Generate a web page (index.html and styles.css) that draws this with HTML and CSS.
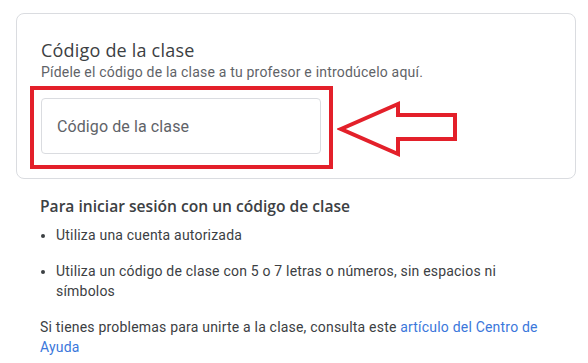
FILE: index.html
```html
<!DOCTYPE html>
<html lang="es">
<head>
    <meta charset="UTF-8">
    <meta name="viewport" content="width=device-width, initial-scale=1.0">
    <title>Unirse a una clase</title>
    <link rel="stylesheet" href="styles.css">
</head>
<body>
<div class="page">
    <div class="card">
        <div class="card-title">Código de la clase</div>
        <div class="card-sub">Pídele el código de la clase a tu profesor e introdúcelo aquí.</div>
        <input type="text" class="code-input" placeholder="Código de la clase">

        <!-- annotation drawn over the card -->
        <div class="mark-box"></div>
        <svg class="mark-arrow" width="130" height="64" viewBox="0 0 130 64">
            <polygon points="4,30 61,5 61,16 118,16 118,40 61,40 61,55"
                     fill="none" stroke="#e3202a" stroke-width="4" stroke-linejoin="miter"/>
        </svg>
    </div>

    <div class="help">
        <div class="help-title">Para iniciar sesión con un código de clase</div>
        <ul class="help-list">
            <li>Utiliza una cuenta autorizada</li>
            <li>Utiliza un código de clase con 5 o 7 letras o números, sin espacios ni símbolos</li>
        </ul>
        <p class="help-note">Si tienes problemas para unirte a la clase, consulta este <a href="#">artículo del Centro de Ayuda</a></p>
    </div>
</div>
</body>
</html>
```

FILE: styles.css
```css
body {
    margin: 0;
    background: #fff;
    font-family: Roboto, "Liberation Sans", Arial, sans-serif;
    color: #3c4043;
}
.page {
    width: 560px;
    padding: 13px 0 0 16px;
}
.card {
    position: relative;
    border: 1px solid #dadce0;
    border-radius: 8px;
    padding: 25px 24px 24px 24px;
}
.card-title {
    font-family: "Open Sans", sans-serif;
    font-size: 18px;
    line-height: 23px;
    letter-spacing: 0.2px;
    color: #3c4043;
}
.card-sub {
    font-size: 14px;
    line-height: 20px;
    color: #5f6368;
    letter-spacing: 0.2px;
}
.code-input {
    display: block;
    box-sizing: border-box;
    width: 280px;
    height: 56px;
    margin-top: 16px;
    padding: 0 15px;
    border: 1px solid #dadce0;
    border-radius: 4px;
    font-family: Roboto, sans-serif;
    font-size: 16px;
    letter-spacing: 0.1px;
    color: #3c4043;
    outline: none;
}
.code-input::placeholder {
    color: #5f6368;
}
.mark-box {
    position: absolute;
    left: 13px;
    top: 72px;
    width: 295px;
    height: 75px;
    border: 4px solid #e3202a;
}
.mark-arrow {
    position: absolute;
    left: 320px;
    top: 85px;
}
.help {
    padding: 0 32px 0 24px;
}
.help-title {
    font-family: "Open Sans", sans-serif;
    font-weight: 600;
    font-size: 15.6px;
    line-height: 20px;
    margin-top: 17px;
    color: #3c4043;
}
.help-list {
    margin: 9px 0 0 0;
    padding-left: 16px;
    font-size: 14px;
    line-height: 20px;
    letter-spacing: 0.2px;
}
.help-list li {
    margin-bottom: 16px;
}
.help-note {
    margin: 0;
    font-size: 14px;
    line-height: 20px;
    letter-spacing: 0.2px;
}
.help-note a {
    color: #3b77db;
    text-decoration: none;
}
```
